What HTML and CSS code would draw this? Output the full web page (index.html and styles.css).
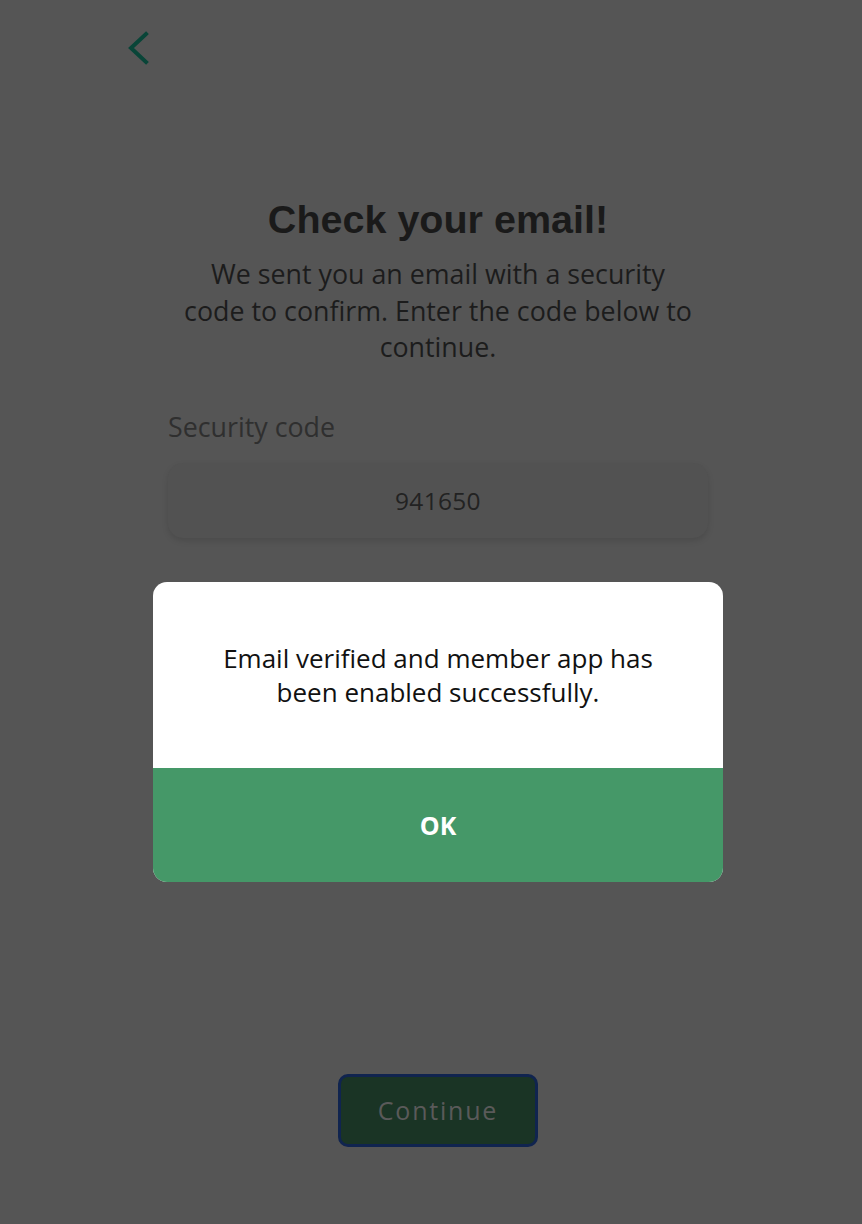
FILE: index.html
```html
<!DOCTYPE html>
<html lang="en">
<head>
<meta charset="utf-8">
<title>Check your email</title>
<link rel="stylesheet" href="styles.css">
</head>
<body>
<div class="page">
  <div class="back">
    <svg width="24" height="36" viewBox="0 0 24 36">
      <path d="M20 4 L5 18 L20 32" fill="none" stroke="#094538" stroke-width="4" stroke-linecap="square" stroke-linejoin="miter"/>
    </svg>
  </div>
  <div class="content">
    <h1 class="title">Check your email!</h1>
    <p class="intro">We sent you an email with a security code to confirm. Enter the code below to continue.</p>
    <div class="label">Security code</div>
    <div class="input">941650</div>
  </div>
  <div class="footer">
    <div class="continue">Continue</div>
  </div>
</div>
<div class="modal">
  <div class="modal-body">Email verified and member app has been enabled successfully.</div>
  <div class="modal-ok">OK</div>
</div>
</body>
</html>
```
FILE: styles.css
```css
html, body {
  margin: 0;
  padding: 0;
  background: #555555;
  height: 100%;
}
body {
  font-family: "Open Sans", "Noto Sans", sans-serif;
  position: relative;
  width: 862px;
  height: 1224px;
  overflow: hidden;
}
.page {
  display: flex;
  flex-direction: column;
}
.back {
  margin: 30px 0 0 126px;
  width: 24px;
  height: 36px;
}
.back svg { display: block; }
.content {
  width: 540px;
  margin: 130px 0 0 168px;
  display: flex;
  flex-direction: column;
}
.title {
  margin: 0;
  font-family: "Liberation Sans", Arial, sans-serif;
  font-weight: 700;
  font-size: 39.5px;
  line-height: 46px;
  color: #1a1a1a;
  text-align: center;
}
.intro {
  margin: 14px auto 0;
  width: 519px;
  font-size: 26.8px;
  line-height: 36.5px;
  color: #1c1c1c;
  text-align: center;
}
.label {
  margin-top: 44px;
  font-size: 26.8px;
  line-height: 34px;
  color: #2f2f2f;
}
.input {
  margin-top: 19px;
  height: 75px;
  border-radius: 15px;
  background: #525252;
  box-shadow: 0 3px 6px rgba(0,0,0,0.12);
  display: flex;
  align-items: center;
  justify-content: center;
  font-size: 24.5px;
  color: #222222;
  letter-spacing: 0.3px;
}
.footer {
  margin-top: 536px;
  display: flex;
  justify-content: center;
  padding-left: 14px;
}
.continue {
  width: 194px;
  height: 67px;
  border: 3px solid #10244f;
  border-radius: 10px;
  background: #1a3425;
  color: #5a5a5a;
  font-size: 25px;
  letter-spacing: 1.8px;
  display: flex;
  align-items: center;
  justify-content: center;
}
.modal {
  position: absolute;
  left: 153px;
  top: 582px;
  width: 570px;
  border-radius: 14px;
  overflow: hidden;
  background: #ffffff;
}
.modal-body {
  padding: 59px 50px;
  height: 68px;
  font-size: 26px;
  line-height: 34px;
  color: #111111;
  text-align: center;
}
.modal-ok {
  height: 114px;
  background: #459868;
  color: #ffffff;
  font-weight: 700;
  font-size: 25px;
  display: flex;
  align-items: center;
  justify-content: center;
}
```
